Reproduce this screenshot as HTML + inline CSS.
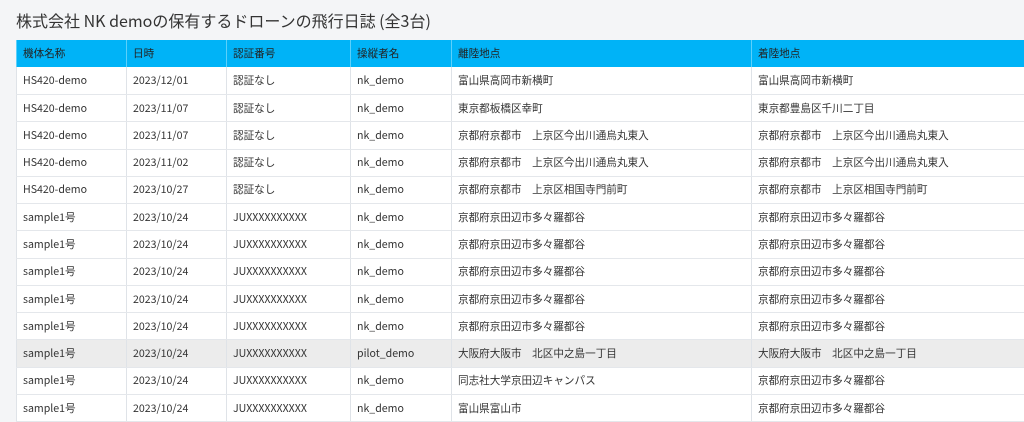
<!DOCTYPE html>
<html><head><meta charset="utf-8"><style>
body{margin:0;background:#f4f5f7;font-family:"Liberation Sans","Noto Sans CJK JP",sans-serif;width:1024px;height:412px;overflow:hidden;position:relative}
h1{position:absolute;left:16px;top:8px;margin:0;font-size:16px;font-weight:normal;color:#333;white-space:nowrap;font-family:"Noto Sans CJK JP",sans-serif}
table{position:absolute;left:16px;top:40px;border-collapse:collapse;width:1030px;table-layout:fixed;font-size:10.6px;color:#333;font-family:"Noto Sans CJK JP",sans-serif}
td,th{height:27.27px;padding:0 0 0 6px;text-align:left;white-space:nowrap;overflow:hidden;border-left:1px solid #dfe3e8;border-bottom:1px solid #e4e7eb;box-sizing:border-box}
th{background:#00b3f7;font-weight:normal;color:#222;border-left:1px solid #5cd0fb;border-bottom:none}
tr{background:#fff}
tr.g{background:#ececec}
</style></head><body>
<h1>株式会社 NK demoの保有するドローンの飛行日誌 (全3台)</h1>
<table>
<colgroup><col style="width:110px"><col style="width:100px"><col style="width:124px"><col style="width:101px"><col style="width:300px"><col style="width:295px"></colgroup>
<tr><th>機体名称</th><th>日時</th><th>認証番号</th><th>操縦者名</th><th>離陸地点</th><th>着陸地点</th></tr>
<tr><td>HS420-demo</td><td>2023/12/01</td><td>認証なし</td><td>nk_demo</td><td>富山県高岡市新横町</td><td>富山県高岡市新横町</td></tr>
<tr><td>HS420-demo</td><td>2023/11/07</td><td>認証なし</td><td>nk_demo</td><td>東京都板橋区幸町</td><td>東京都豊島区千川二丁目</td></tr>
<tr><td>HS420-demo</td><td>2023/11/07</td><td>認証なし</td><td>nk_demo</td><td>京都府京都市　上京区今出川通烏丸東入</td><td>京都府京都市　上京区今出川通烏丸東入</td></tr>
<tr><td>HS420-demo</td><td>2023/11/02</td><td>認証なし</td><td>nk_demo</td><td>京都府京都市　上京区今出川通烏丸東入</td><td>京都府京都市　上京区今出川通烏丸東入</td></tr>
<tr><td>HS420-demo</td><td>2023/10/27</td><td>認証なし</td><td>nk_demo</td><td>京都府京都市　上京区相国寺門前町</td><td>京都府京都市　上京区相国寺門前町</td></tr>
<tr><td>sample1号</td><td>2023/10/24</td><td>JUXXXXXXXXXX</td><td>nk_demo</td><td>京都府京田辺市多々羅都谷</td><td>京都府京田辺市多々羅都谷</td></tr>
<tr><td>sample1号</td><td>2023/10/24</td><td>JUXXXXXXXXXX</td><td>nk_demo</td><td>京都府京田辺市多々羅都谷</td><td>京都府京田辺市多々羅都谷</td></tr>
<tr><td>sample1号</td><td>2023/10/24</td><td>JUXXXXXXXXXX</td><td>nk_demo</td><td>京都府京田辺市多々羅都谷</td><td>京都府京田辺市多々羅都谷</td></tr>
<tr><td>sample1号</td><td>2023/10/24</td><td>JUXXXXXXXXXX</td><td>nk_demo</td><td>京都府京田辺市多々羅都谷</td><td>京都府京田辺市多々羅都谷</td></tr>
<tr><td>sample1号</td><td>2023/10/24</td><td>JUXXXXXXXXXX</td><td>nk_demo</td><td>京都府京田辺市多々羅都谷</td><td>京都府京田辺市多々羅都谷</td></tr>
<tr class="g"><td>sample1号</td><td>2023/10/24</td><td>JUXXXXXXXXXX</td><td>pilot_demo</td><td>大阪府大阪市　北区中之島一丁目</td><td>大阪府大阪市　北区中之島一丁目</td></tr>
<tr><td>sample1号</td><td>2023/10/24</td><td>JUXXXXXXXXXX</td><td>nk_demo</td><td>同志社大学京田辺キャンパス</td><td>京都府京田辺市多々羅都谷</td></tr>
<tr><td>sample1号</td><td>2023/10/24</td><td>JUXXXXXXXXXX</td><td>nk_demo</td><td>富山県富山市</td><td>京都府京田辺市多々羅都谷</td></tr>
</table>
</body></html>
